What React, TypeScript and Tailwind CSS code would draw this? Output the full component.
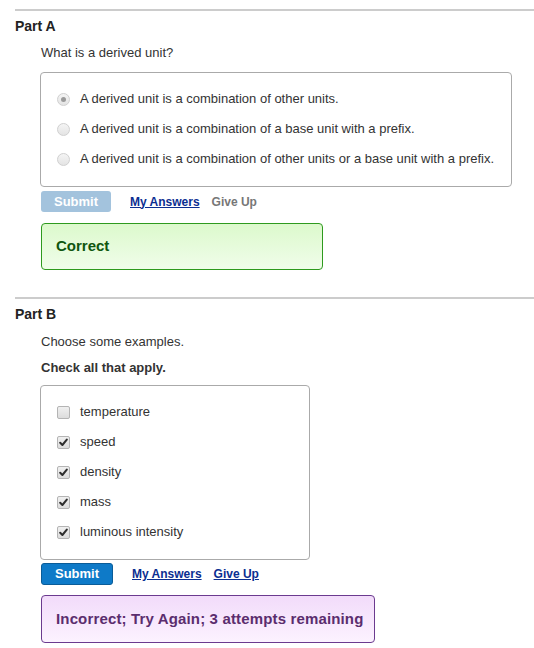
import type { ReactNode } from 'react'

const partAOptions = [
  'A derived unit is a combination of other units.',
  'A derived unit is a combination of a base unit with a prefix.',
  'A derived unit is a combination of other units or a base unit with a prefix.',
]

const partBOptions = [
  { label: 'temperature', checked: false },
  { label: 'speed', checked: true },
  { label: 'density', checked: true },
  { label: 'mass', checked: true },
  { label: 'luminous intensity', checked: true },
]

function Radio({ selected }: { selected: boolean }) {
  return (
    <span className="flex h-[13px] w-[13px] items-center justify-center rounded-full border border-[#d0d0d0] bg-gradient-to-b from-[#f4f4f4] to-[#e4e4e4]">
      {selected && <span className="h-[5px] w-[5px] rounded-full bg-[#9a9a9a]" />}
    </span>
  )
}

function Checkbox({ checked }: { checked: boolean }) {
  return (
    <span className="flex h-[13px] w-[13px] items-center justify-center rounded-[2px] border border-[#b4b4b4] bg-gradient-to-b from-[#f0f0f0] to-[#dcdcdc]">
      {checked && (
        <svg width="9" height="9" viewBox="0 0 9 9">
          <path d="M1.2 4.8 L3.4 7 L7.8 1.6" fill="none" stroke="#2e2e2e" strokeWidth="2" strokeLinecap="round" strokeLinejoin="round" />
        </svg>
      )}
    </span>
  )
}

function PartHeader({ title }: { title: string }) {
  return (
    <>
      <div className="h-[2px] bg-[#cccccc]" />
      <h2 className="mt-[6px] text-[14px] leading-[18px] font-bold text-[#222]">{title}</h2>
    </>
  )
}

function ChoiceRow({ control, children }: { control: ReactNode; children: ReactNode }) {
  return (
    <div className="flex h-[30px] items-center">
      <span className="ml-[16px] flex w-[22px] shrink-0">{control}</span>
      <span className="pl-px">{children}</span>
    </div>
  )
}

export default function App() {
  return (
    <div className="min-h-[648px] bg-white pt-[9px] pl-[15px] font-['Liberation_Sans',Arial,sans-serif] text-[13px] text-[#333]">
      <section>
        <PartHeader title="Part A" />
        <div className="ml-[25px]">
          <p className="mt-[9px] pl-px leading-[18px]">What is a derived unit?</p>

          <div className="mt-[10px] w-[472px] rounded-[4px] border border-[#aaaaaa] pt-[11px] pb-[12px]">
            {partAOptions.map((option, index) => (
              <ChoiceRow key={option} control={<Radio selected={index === 0} />}>
                {option}
              </ChoiceRow>
            ))}
          </div>

          <div className="mt-[4px] flex items-center">
            <button
              type="button"
              disabled
              className="ml-px h-[21px] w-[70px] rounded-[3px] bg-[#a3c3dd] text-[13px] font-bold text-white"
            >
              Submit
            </button>
            <a className="ml-[19px] text-[12px] font-bold text-[#0b2e91] underline">My Answers</a>
            <span className="ml-[12px] text-[12px] font-bold text-[#777]">Give Up</span>
          </div>

          <div className="mt-[11px] ml-px flex h-[47px] w-[282px] items-center rounded-[4px] border border-[#2e9a1e] bg-gradient-to-b from-[#dcf9cc] to-[#f0fdea] pl-[14px]">
            <span className="text-[15px] font-bold text-[#0f560f]">Correct</span>
          </div>
        </div>
      </section>

      <section className="mt-[27px]">
        <PartHeader title="Part B" />
        <div className="ml-[25px]">
          <p className="mt-[10px] pl-px leading-[18px]">Choose some examples.</p>
          <p className="mt-[8px] pl-px leading-[18px] font-bold">Check all that apply.</p>

          <div className="mt-[8px] w-[270px] rounded-[4px] border border-[#aaaaaa] pt-[11px] pb-[12px]">
            {partBOptions.map((option) => (
              <ChoiceRow key={option.label} control={<Checkbox checked={option.checked} />}>
                {option.label}
              </ChoiceRow>
            ))}
          </div>

          <div className="mt-[3px] flex items-center">
            <button
              type="button"
              className="ml-px h-[22px] w-[72px] rounded-[3px] border border-[#0a5c98] bg-[#0e7ac8] text-[13px] font-bold text-white"
            >
              Submit
            </button>
            <a className="ml-[19px] text-[12px] font-bold text-[#0b2e91] underline">My Answers</a>
            <a className="ml-[12px] text-[12px] font-bold text-[#0b2e91] underline">Give Up</a>
          </div>

          <div className="mt-[10px] ml-px flex h-[48px] w-[334px] items-center rounded-[4px] border border-[#6b3a8f] bg-gradient-to-b from-[#f2dbfa] to-[#fcf2ff] pl-[14px]">
            <span className="text-[15px] font-bold tracking-[0.15px] text-[#5b2d6e]">Incorrect; Try Again; 3 attempts remaining</span>
          </div>
        </div>
      </section>
    </div>
  )
}
